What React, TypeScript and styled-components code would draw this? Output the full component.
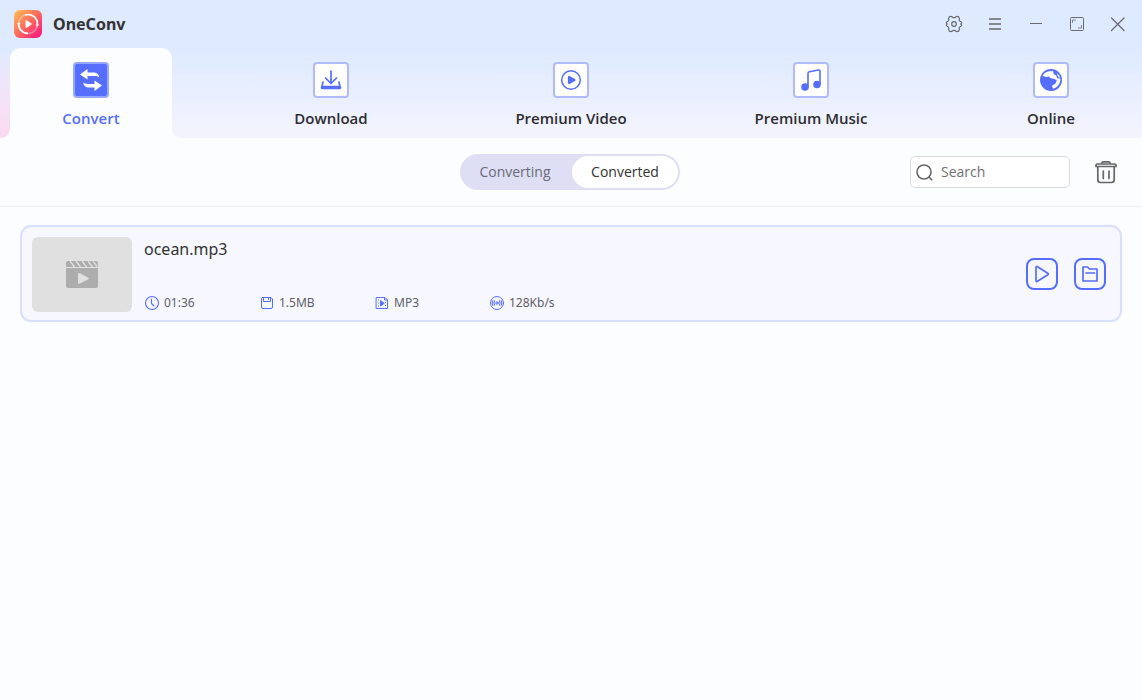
import React, { useState } from "react";
import styled, { createGlobalStyle } from "styled-components";

const blue = "#566eff";
const page = "#fcfdff";

const GlobalStyle = createGlobalStyle`
  *, *::before, *::after { box-sizing: border-box; }
  body { margin: 0; background: ${page}; font-family: "Noto Sans", "Open Sans", sans-serif; color: #333; }
  button { font: inherit; color: inherit; border: 0; padding: 0; background: none; cursor: pointer; }
  svg { display: block; flex: none; }
`;

const Window = styled.div`
  min-height: 100vh;
  background: ${page};
`;

const Header = styled.header`
  background:
    linear-gradient(to bottom, rgba(250, 218, 243, 0) 36%, #fadaf3 96%) 0 0 / 12px 100% no-repeat,
    linear-gradient(to bottom, #deeaff 0, #deeaff 36%, #f4f4ff 100%);
`;

const TitleBar = styled.div`
  display: flex;
  align-items: center;
  height: 48px;
  padding: 0 15px 0 14px;
`;

const AppName = styled.h1`
  margin: 0 auto 0 11px;
  font-size: 16px;
  line-height: 24px;
  font-weight: 700;
`;

const WindowControls = styled.div`
  display: flex;
  gap: 23px;
`;

const ControlButton = styled.button`
  display: grid;
  place-items: center;
  width: 18px;
  height: 24px;
  color: #6a6b70;
`;

const Tabs = styled.nav`
  display: flex;
  justify-content: space-between;
  padding: 0 10px;
`;

const Tab = styled.button<{ $active?: boolean }>`
  position: relative;
  display: flex;
  flex-direction: column;
  align-items: center;
  gap: 8px;
  width: 162px;
  height: 90px;
  padding-top: 14px;
  border-radius: 10px 10px 0 0;
  font-family: "Open Sans", "Noto Sans", sans-serif;
  font-size: 15px;
  line-height: 24px;
  font-weight: 650;
  white-space: nowrap;
  color: ${(p) => (p.$active ? blue : "#2d2d30")};
  background: ${(p) => (p.$active ? page : "transparent")};

  &::before, &::after {
    content: ${(p) => (p.$active ? '""' : "none")};
    position: absolute;
    bottom: 0;
    width: 8px;
    height: 8px;
  }
  &::before { right: 100%; background: radial-gradient(circle at 0 0, transparent 7px, ${page} 8px); }
  &::after { left: 100%; background: radial-gradient(circle at 100% 0, transparent 7px, ${page} 8px); }
`;

const TabIcon = styled.span<{ $active?: boolean }>`
  display: grid;
  place-items: center;
  width: 36px;
  height: 36px;
  border: 2px solid ${(p) => (p.$active ? "#98a6ff" : "#b0baff")};
  border-radius: 4px;
  background: ${(p) => (p.$active ? blue : "#fff")};
  color: ${(p) => (p.$active ? "#fff" : blue)};
`;

const Toolbar = styled.div`
  display: grid;
  grid-template-columns: 1fr auto 1fr;
  align-items: center;
  height: 69px;
  padding: 0 24px 0 22px;
  border-bottom: 1px solid #eeeff4;
`;

const Segments = styled.div`
  grid-column: 2;
  display: flex;
  justify-content: space-between;
  width: 220px;
  height: 36px;
  padding: 2px;
  border-radius: 18px;
  background: #dedef5;
`;

const Segment = styled.button<{ $active?: boolean }>`
  width: 106px;
  border-radius: 16px;
  font-family: "Open Sans", "Noto Sans", sans-serif;
  font-size: 14px;
  line-height: 20px;
  color: ${(p) => (p.$active ? "#333" : "#6b6b78")};
  background: ${(p) => (p.$active ? "#fff" : "transparent")};
`;

const ToolbarEnd = styled.div`
  display: flex;
  justify-content: flex-end;
  align-items: center;
  gap: 24px;
`;

const SearchBox = styled.label`
  display: flex;
  align-items: center;
  gap: 8px;
  width: 160px;
  height: 32px;
  padding: 0 5px;
  border: 1px solid #dcdce0;
  border-radius: 5px;
  background: #fff;
  color: #66676b;
`;

const SearchInput = styled.input`
  flex: 1;
  min-width: 0;
  padding: 0;
  border: 0;
  outline: 0;
  background: none;
  font-family: "Open Sans", "Noto Sans", sans-serif;
  font-size: 14px;
  line-height: 20px;
  color: #333;
  &::placeholder { color: #6f7075; opacity: 1; }
`;

const TrashButton = styled.button`
  color: #66676b;
`;

const FileList = styled.ul`
  margin: 0;
  padding: 18px 20px;
  list-style: none;
`;

const FileCard = styled.li`
  display: flex;
  align-items: center;
  gap: 12px;
  padding: 10px 14px 8px 10px;
  border: 2px solid #d9dfff;
  border-radius: 11px;
  background: #f6f7ff;
`;

const Thumbnail = styled.div`
  display: grid;
  place-items: center;
  width: 100px;
  height: 75px;
  border-radius: 6px;
  background: #e0e0e0;
`;

const FileInfo = styled.div`
  flex: 1;
  display: flex;
  flex-direction: column;
  justify-content: space-between;
  height: 75px;
`;

const FileName = styled.div`
  font-size: 16px;
  line-height: 24px;
`;

const MetaRow = styled.div`
  display: flex;
`;

const Meta = styled.div`
  display: flex;
  align-items: center;
  gap: 4px;
  width: 115px;
  font-size: 12px;
  line-height: 18px;
  color: #606066;
  svg { color: ${blue}; }
`;

const Actions = styled.div`
  display: flex;
  gap: 16px;
  padding-bottom: 2px;
`;

const ActionButton = styled.button`
  display: grid;
  place-items: center;
  width: 32px;
  height: 32px;
  border: 2px solid ${blue};
  border-radius: 8px;
  color: ${blue};
`;

const line = { fill: "none", stroke: "currentColor", strokeLinecap: "round", strokeLinejoin: "round" } as const;

const Logo = () => (
  <svg width="28" height="28" viewBox="0 0 28 28" aria-hidden="true">
    <defs>
      <linearGradient id="logo" x1="0" y1="0" x2="1" y2="1">
        <stop offset="0" stopColor="#ffc154" />
        <stop offset=".5" stopColor="#ff6a5c" />
        <stop offset="1" stopColor="#fb0c83" />
      </linearGradient>
    </defs>
    <rect width="28" height="28" rx="6" fill="url(#logo)" />
    <circle cx="14" cy="14" r="9.5" fill="none" stroke="#fff" strokeOpacity=".35" strokeWidth="1.6" />
    <path d="M11 5A9.4 9.4 0 0 1 23.4 14.5M4.6 13A9.5 9.5 0 0 0 14 23.4" fill="none" stroke="#fff" strokeWidth="1.6" />
    <path d="m21.3 14.5 2 2.2 2-2.2zM3 14l1.600-2 2 2z" fill="#fff" />
    <path d="M11.500 11.200v5.600c0 .9.800 1.200 1.500.7l4.200-2.700c.7-.5.700-1.100 0-1.600L13 10.500c-.7-.5-1.500-.2-1.500.7Z" fill="#fff" />
  </svg>
);

const GearIcon = () => (
  <svg width="18" height="18" viewBox="0 0 18 18" {...line} strokeWidth="1.200">
    <path d="M6 1.400C7.300 1.400 7.300 2.700 9 2.700s1.700-1.300 3-1.300c1.100 0 2.100.8 2.300 1.800.2 1-.4 1.500.2 2.500s2.200.8 2.200 2.200c0 .6-.9.600-.9 1.100s.9.500.9 1.100c0 1.400-1.600 1.200-2.200 2.200s0 1.500-.2 2.500c-.2 1-1.200 1.800-2.300 1.800-1.300 0-1.300-1.300-3-1.300s-1.700 1.300-3 1.300c-1.100 0-2.100-.8-2.300-1.800-.2-1 .4-1.500-.2-2.500s-2.200-.8-2.200-2.200c0-.6.900-.6.900-1.100s-.9-.5-.9-1.100c0-1.400 1.600-1.200 2.200-2.200s0-1.500.2-2.500C3.900 2.200 4.900 1.400 6 1.400Z" />
    <circle cx="9" cy="9" r="2.300" />
  </svg>
);

const MenuIcon = () => (
  <svg width="14" height="14" viewBox="0 0 14 14" fill="none" stroke="#85868e" strokeWidth="2">
    <path d="M1 2h12M1 7h12M1 12h12" />
  </svg>
);

const MinimizeIcon = () => (
  <svg width="14" height="14" viewBox="0 0 14 14" fill="none" stroke="currentColor">
    <path d="M1 6.500h12" />
  </svg>
);

const MaximizeIcon = () => (
  <svg width="16" height="16" viewBox="0 0 16 16" fill="none" stroke="currentColor">
    <rect x="1.500" y="1.500" width="13" height="13" rx="1" />
    <path d="M3.500 7V4H7M12.500 9v3H9" opacity=".8" />
  </svg>
);

const CloseIcon = () => (
  <svg width="16" height="16" viewBox="0 0 16 16" {...line} strokeWidth="1.300">
    <path d="m1.500 2 12.500 12.500M14 2 1.500 14.500" />
  </svg>
);

const ConvertIcon = () => (
  <svg width="24" height="24" viewBox="0 0 24 24" fill="currentColor">
    <path d="M1 6.500 8.500 1v3.500h5.700c3.500 0 5.800 1.600 6 5-1.200-1-2.600-1.400-4.500-1.400H8.500V11.500Z" />
    <path d="M23 17.500 15.500 23v-3.500H10.300c-3.500 0-5.800-1.600-6-5 1.200 1 2.600 1.400 4.500 1.400h6.700V12.500Z" />
  </svg>
);

const DownloadIcon = () => (
  <svg width="24" height="24" viewBox="0 0 24 24" {...line}>
    <path d="M12 3v12M6.500 10l5.500 5.500 5.500-5.500" strokeWidth="1.700" />
    <path d="M4 14 2.700 20M20 14l1.300 6" strokeWidth="1.700" />
    <path d="M3.500 19.500h17" strokeWidth="3.400" />
  </svg>
);

const VideoIcon = () => (
  <svg width="24" height="24" viewBox="0 0 24 24" {...line} strokeWidth="1.500">
    <circle cx="12" cy="12" r="9.300" />
    <path d="M10 9v6l5.500-3Z" fill="currentColor" strokeWidth="2.200" />
  </svg>
);

const MusicIcon = () => (
  <svg width="24" height="24" viewBox="0 0 24 24" {...line} strokeWidth="1.600">
    <path d="M9 19V5.500c0-1 .5-1.500 1.400-1.700L19.500 2c1-.2 1.500.3 1.500 1.200V16" />
    <circle cx="6" cy="19" r="3" fill="currentColor" />
    <circle cx="18" cy="16.500" r="3" fill="currentColor" />
  </svg>
);

const GlobeIcon = () => (
  <svg width="24" height="24" viewBox="0 0 24 24">
    <circle cx="12" cy="12" r="11" fill="currentColor" />
    <path d="M10.500 3.300 14 3l1 3.200 2.500 1 .8 3 3 .3c.4 4.500-2.300 8.800-7.300 10.300l-1-3 3.500-2.300 1.300-3.200-3-1.600-3.300-.5-1.300-1.700-3.200.6-3.400-1.300C4.600 5.500 7.200 3.700 10.500 3.300Z" fill="#fff" />
    <path d="M14.500 2.500 20 6l1 4.200-3-.4-.7-2.800-2.300-1Z" fill="currentColor" />
    <path d="m17.500 4.700 2.700 2.800.8 2.500-1.500-.7-1-2.300Z" fill="#fff" />
  </svg>
);

const SearchIcon = () => (
  <svg width="17" height="17" viewBox="0 0 17 17" {...line} strokeWidth="1.600">
    <circle cx="8" cy="8" r="7" />
    <path d="m13 13 2.700 2.700" />
  </svg>
);

const TrashIcon = () => (
  <svg width="24" height="24" viewBox="0 0 24 24" {...line} strokeWidth="1.700">
    <path d="M8 4V3c0-.8.400-1.200 1.200-1.200h5.600c.8 0 1.200.400 1.200 1.200v1M2 6.500V5.200C2 4.400 2.500 4 3.500 4h17c1 0 1.500.400 1.500 1.200v1.300Z" />
    <path d="M3.800 7v12.500c0 2 .8 3 2.700 3h11c2 0 2.700-1 2.700-3V7M9.300 11v7.500M15 11v7.500" />
  </svg>
);

const ClapperIcon = () => (
  <svg width="32" height="28" viewBox="0 0 32 28">
    <path d="M2 0h28q2 0 2 2v4H0V2q0-2 2-2ZM0 7h32v18q0 2-2 2H2q-2 0-2-2Z" fill="#adadad" />
    <path d="m4 0 4.500 6m1.500-6 4.500 6m1.500-6 4.500 6m1.500-6 4.500 6m.5-6 4 5.500" stroke="#e0e0e0" strokeWidth="1.300" />
    <path d="M12 13v8.500c0 1.400 1 1.600 2 1.100l8-4.200c1-.6 1-1.300 0-1.900l-8-4.200c-1-.6-2-.3-2 .7Z" fill="#e0e0e0" />
  </svg>
);

const ClockIcon = () => (
  <svg width="16" height="16" viewBox="0 0 16 16" {...line} strokeWidth="1.100">
    <circle cx="8" cy="8" r="6.500" />
    <path d="M7.500 4v4.500l2.500 2.500" />
  </svg>
);

const DiskIcon = () => (
  <svg width="16" height="16" viewBox="0 0 16 16" {...line} strokeWidth="1">
    <path d="M3.500 2.500H12l1.500 1.500v8q0 1.500-1.500 1.500H4q-1.500 0-1.500-1.500V3.500q0-1 1-1ZM4.500 2.500v4h7v-4M9.500 3v1.500" />
  </svg>
);

const FilmIcon = () => (
  <svg width="16" height="16" viewBox="0 0 16 16" {...line} strokeWidth="1">
    <path d="M2.500 2.500h8.500l2.500 2.500v8.500h-11ZM10.500 2.500V5h3" />
    <path d="M4.500 4.500v8M11.500 7v6" strokeDasharray="1 2" strokeLinecap="butt" />
    <path d="M6.500 6v5L10 8.500Z" fill="currentColor" />
  </svg>
);

const BitrateIcon = () => (
  <svg width="16" height="16" viewBox="0 0 16 16" {...line} strokeWidth="1">
    <circle cx="8" cy="8" r="6.500" />
    <circle cx="8" cy="8" r="1.200" />
    <path d="M5.500 5.700q-1.400 2.300 0 4.600M10.500 5.700q1.400 2.300 0 4.600M3.700 5.500q-1.200 2.500 0 5M12.300 5.500q1.200 2.500 0 5" />
  </svg>
);

const PlayIcon = () => (
  <svg width="20" height="20" viewBox="0 0 20 20" {...line} strokeWidth="1.700">
    <path d="M4 3.500v13c0 1 .7 1.300 1.500.8l10.300-6.500c.7-.5.700-1.100 0-1.600L5.500 2.700C4.700 2.200 4 2.500 4 3.500Z" />
  </svg>
);

const FolderIcon = () => (
  <svg width="20" height="20" viewBox="0 0 20 20" {...line} strokeWidth="1.700">
    <path d="M3 3h4.500l2 2H17v12H3Z" />
    <path d="M6 9h8.500" />
  </svg>
);

const tabs = [
  { label: "Convert", icon: <ConvertIcon /> },
  { label: "Download", icon: <DownloadIcon /> },
  { label: "Premium Video", icon: <VideoIcon /> },
  { label: "Premium Music", icon: <MusicIcon /> },
  { label: "Online", icon: <GlobeIcon /> },
];

const controls = [
  { label: "Settings", icon: <GearIcon /> },
  { label: "Menu", icon: <MenuIcon /> },
  { label: "Minimize", icon: <MinimizeIcon /> },
  { label: "Maximize", icon: <MaximizeIcon /> },
  { label: "Close", icon: <CloseIcon /> },
];

export default function App() {
  const [tab, setTab] = useState("Convert");
  const [view, setView] = useState("Converted");

  return (
    <Window>
      <GlobalStyle />
      <Header>
        <TitleBar>
          <Logo />
          <AppName>OneConv</AppName>
          <WindowControls>
            {controls.map((c) => (
              <ControlButton key={c.label} aria-label={c.label}>{c.icon}</ControlButton>
            ))}
          </WindowControls>
        </TitleBar>
        <Tabs>
          {tabs.map((t) => (
            <Tab key={t.label} $active={t.label === tab} onClick={() => setTab(t.label)}>
              <TabIcon $active={t.label === tab}>{t.icon}</TabIcon>
              {t.label}
            </Tab>
          ))}
        </Tabs>
      </Header>
      <Toolbar>
        <Segments>
          {["Converting", "Converted"].map((s) => (
            <Segment key={s} $active={s === view} onClick={() => setView(s)}>{s}</Segment>
          ))}
        </Segments>
        <ToolbarEnd>
          <SearchBox>
            <SearchIcon />
            <SearchInput type="text" placeholder="Search" aria-label="Search" />
          </SearchBox>
          <TrashButton aria-label="Delete all"><TrashIcon /></TrashButton>
        </ToolbarEnd>
      </Toolbar>
      <FileList>
        <FileCard>
          <Thumbnail><ClapperIcon /></Thumbnail>
          <FileInfo>
            <FileName>ocean.mp3</FileName>
            <MetaRow>
              <Meta><ClockIcon />01:36</Meta>
              <Meta><DiskIcon />1.5MB</Meta>
              <Meta><FilmIcon />MP3</Meta>
              <Meta><BitrateIcon />128Kb/s</Meta>
            </MetaRow>
          </FileInfo>
          <Actions>
            <ActionButton aria-label="Play"><PlayIcon /></ActionButton>
            <ActionButton aria-label="Open folder"><FolderIcon /></ActionButton>
          </Actions>
        </FileCard>
      </FileList>
    </Window>
  );
}
